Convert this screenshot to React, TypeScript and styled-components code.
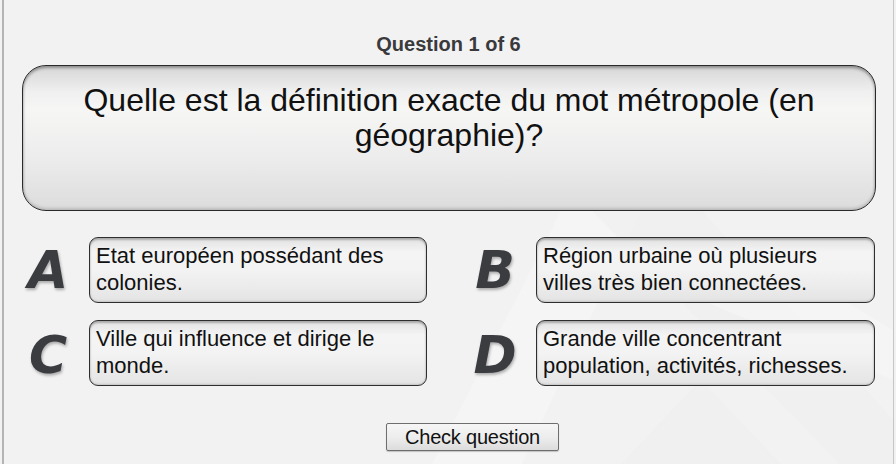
import styled, { createGlobalStyle } from "styled-components";

const Global = createGlobalStyle`
  html, body {
    margin: 0;
    padding: 0;
    background: #f2f2f2;
    font-family: "Liberation Sans", Arial, sans-serif;
  }
`

const Frame = styled.div`
  position: relative;
  height: 464px;
  margin: 0 2px;
  border-left: 2px solid #b4b4b6;
  border-right: 1px solid #c6c6c8;
  background: #f2f2f3;
  display: flex;
  flex-direction: column;
  overflow: hidden;
`

const Watermark = styled.svg`
  position: absolute;
  inset: 0;
  width: 100%;
  height: 100%;
  pointer-events: none;
`

const Counter = styled.div`
  position: relative;
  margin-top: 33px;
  text-align: center;
  font-size: 20px;
  font-weight: bold;
  line-height: 22px;
  color: #3a3a3c;
`

const QuestionBox = styled.div`
  position: relative;
  margin: 10px 17px 0 18px;
  height: 146px;
  box-sizing: border-box;
  padding: 17px 30px 0;
  border: 1px solid #2a2a2a;
  border-radius: 24px;
  background: linear-gradient(to bottom, #d6d6d6 0%, #f0f0f0 18%, #f6f6f5 30%, #ececec 65%, #dcdcdc 100%);
  box-shadow: inset 0 2px 3px rgba(0, 0, 0, 0.35), inset 0 -2px 3px rgba(0, 0, 0, 0.15);
  text-align: center;
  font-size: 32px;
  line-height: 35px;
  color: #111;
`

const Answers = styled.div`
  position: relative;
  margin: 26px 0 0 13px;
  display: grid;
  grid-template-columns: 410px 411px;
  grid-auto-rows: 66px;
  column-gap: 37px;
  row-gap: 17px;
`

const Answer = styled.div`
  display: flex;
  gap: 10px;
`

const Letter = styled.div<{ $shift: number }>`
  width: 62px;
  flex: none;
  display: flex;
  align-items: center;
  justify-content: center;
  padding-top: ${(p) => p.$shift}px;
  font-family: "DejaVu Sans", Verdana, sans-serif;
  font-weight: bold;
  font-style: italic;
  font-size: 52px;
  color: #3a3c40;
  text-shadow: 1px 2px 3px rgba(0, 0, 0, 0.3);
`

const Choice = styled.div`
  flex: 1;
  box-sizing: border-box;
  padding: 4px 6px 0;
  border: 1px solid #2e2e2e;
  border-radius: 9px;
  background: linear-gradient(to bottom, #e2e2e2 0%, #f4f4f4 22%, #f3f3f3 50%, #e4e4e4 100%);
  box-shadow: inset 0 2px 2px rgba(0, 0, 0, 0.25), inset 0 -1px 2px rgba(0, 0, 0, 0.15);
  font-size: 22px;
  line-height: 27px;
  color: #111;
`

const CheckButton = styled.button`
  position: relative;
  align-self: flex-start;
  margin: 37px 0 0 382px;
  width: 173px;
  height: 28px;
  padding: 0;
  border: 1px solid #6e6e6e;
  border-radius: 2px;
  background: linear-gradient(to bottom, #f6f6f6 0%, #ececec 55%, #dcdcdc 100%);
  box-shadow: 0 1px 1px rgba(0, 0, 0, 0.2);
  font-family: "Liberation Sans", Arial, sans-serif;
  font-size: 20px;
  letter-spacing: -0.2px;
  color: #111;
`

const choices = [
  { letter: "A", text: "Etat européen possédant des colonies.", shift: 0 },
  { letter: "B", text: "Région urbaine où plusieurs villes très bien connectées.", shift: 0 },
  { letter: "C", text: "Ville qui influence et dirige le monde.", shift: 4 },
  { letter: "D", text: "Grande ville concentrant population, activités, richesses.", shift: 4 },
]

export default function App() {
  return (
    <>
      <Global />
      <Frame>
        <Watermark viewBox="0 0 893 464" preserveAspectRatio="none">
          <polygon points="430,464 560,210 640,210 520,464" fill="#f6f6f6" opacity="0.7" />
          <polygon points="590,210 700,210 893,420 893,464 840,464" fill="#ededee" opacity="0.5" />
          <polygon points="700,300 760,250 893,330 893,380" fill="#f7f7f7" opacity="0.6" />
          <polygon points="620,464 700,380 780,464" fill="#eeeeef" opacity="0.5" />
        </Watermark>
        <Counter>Question 1 of 6</Counter>
        <QuestionBox>Quelle est la définition exacte du mot métropole (en géographie)?</QuestionBox>
        <Answers>
          {choices.map((c) => (
            <Answer key={c.letter}>
              <Letter $shift={c.shift}>{c.letter}</Letter>
              <Choice>{c.text}</Choice>
            </Answer>
          ))}
        </Answers>
        <CheckButton>Check question</CheckButton>
      </Frame>
    </>
  )
}
